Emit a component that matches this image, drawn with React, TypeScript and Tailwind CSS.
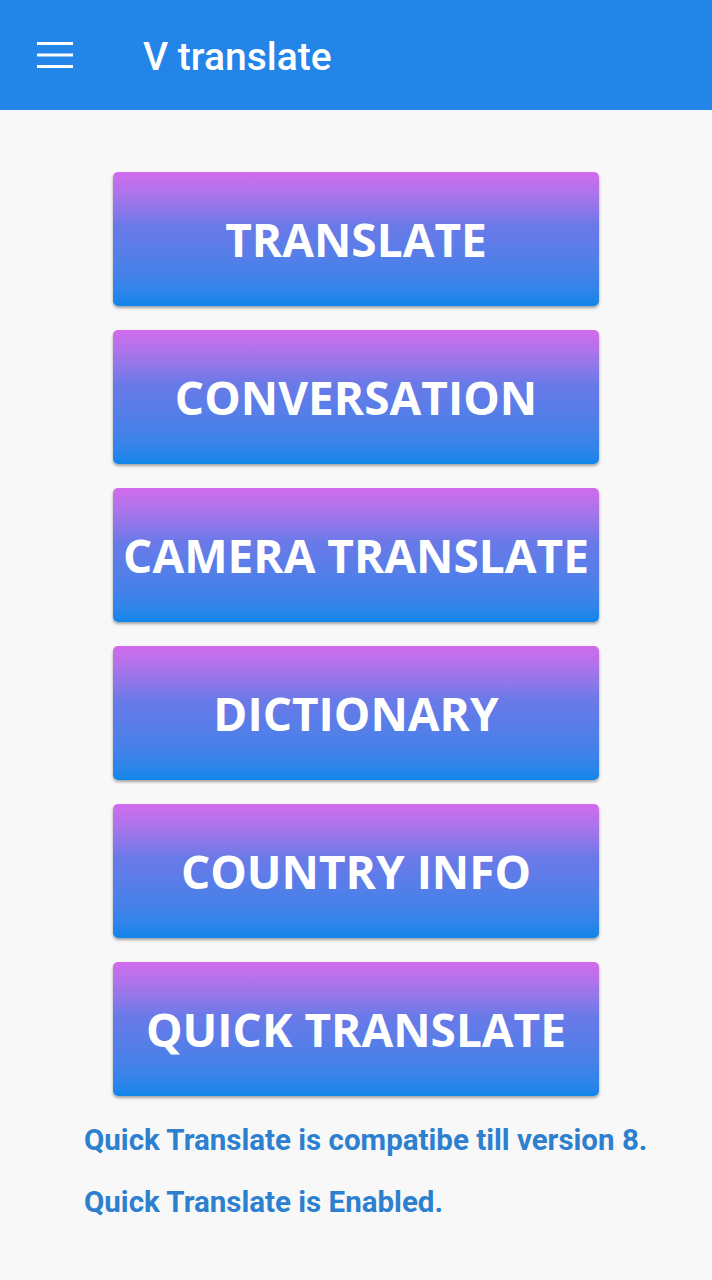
const items = [
  "TRANSLATE",
  "CONVERSATION",
  "CAMERA TRANSLATE",
  "DICTIONARY",
  "COUNTRY INFO",
  "QUICK TRANSLATE",
];

export default function App() {
  return (
    <div className="min-h-[1280px] bg-[#f8f8f8] font-['Roboto',sans-serif]">
      <header className="flex h-[110px] items-center bg-[#2385e8] pl-[37px]">
        <svg width="36" height="26" viewBox="0 0 36 26" className="shrink-0">
          <rect x="0" y="0" width="36" height="3" fill="#fff" />
          <rect x="0" y="11.5" width="36" height="3" fill="#fff" />
          <rect x="0" y="23" width="36" height="3" fill="#fff" />
        </svg>
        <h1 className="ml-[70px] mt-[4px] text-[39px] font-medium text-white leading-none">
          V translate
        </h1>
      </header>

      <main className="flex flex-col items-center pt-[62px]">
        <div className="flex flex-col gap-[24px]">
          {items.map((label) => (
            <button
              key={label}
              className="flex h-[134px] w-[486px] items-center justify-center rounded-[5px] bg-gradient-to-b from-[#d26bec] via-[#6a79e8] via-40% to-[#0c86ea] shadow-[0_2px_3px_rgba(0,0,0,0.35)] font-['Open_Sans',sans-serif] text-[46px] font-bold text-white"
            >
              {label}
            </button>
          ))}
        </div>
      </main>

      <div className="mt-[30px] pl-[84px] text-[29.5px] font-bold text-[#2d7fcf] leading-none">
        <p>Quick Translate is compatibe till version 8.</p>
        <p className="mt-[32px]">Quick Translate is Enabled.</p>
      </div>
    </div>
  );
}
